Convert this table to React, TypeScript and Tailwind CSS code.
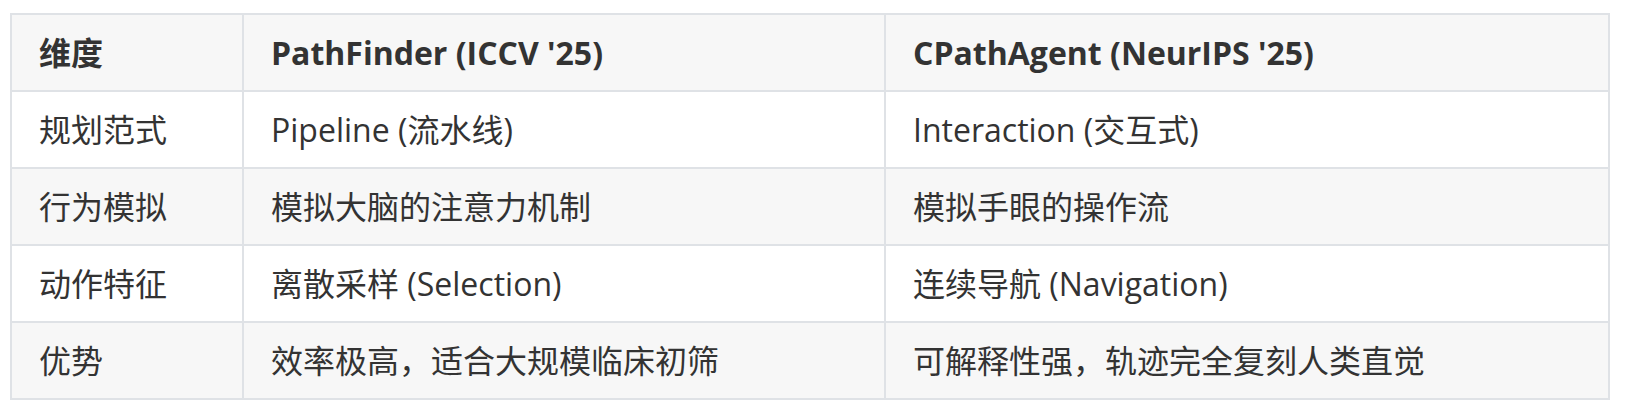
import React from "react";

const HEADERS = ["维度", "PathFinder (ICCV '25)", "CPathAgent (NeurIPS '25)"];

const ROWS: string[][] = [
  ["规划范式", "Pipeline (流水线)", "Interaction (交互式)"],
  ["行为模拟", "模拟大脑的注意力机制", "模拟手眼的操作流"],
  ["动作特征", "离散采样 (Selection)", "连续导航 (Navigation)"],
  ["优势", "效率极高，适合大规模临床初筛", "可解释性强，轨迹完全复刻人类直觉"],
];

export default function App() {
  return (
    <div
      className="min-h-[411px] w-full bg-white pl-[10px] pt-[13px] text-[#333333]"
      style={{ fontFamily: '"Open Sans", "Noto Sans CJK SC", sans-serif' }}
    >
      <div className="grid w-[1600px] grid-cols-[230px_640px_722px] gap-[2px] bg-[#dfe2e6] p-[2px] text-[32px] leading-[49px]">
        {/* Header */}
        {HEADERS.map((h) => (
          <div key={h} className="bg-[#f7f7f7] px-[27px] py-[13px] font-bold whitespace-nowrap">
            {h}
          </div>
        ))}

        {/* Body rows, zebra striped */}
        {ROWS.map((row, i) =>
          row.map((cell, j) => (
            <div
              key={`${i}-${j}`}
              className={
                (i % 2 === 1 ? "bg-[#f7f7f7]" : "bg-white") +
                " px-[27px] py-[13px] whitespace-nowrap"
              }
            >
              {cell}
            </div>
          ))
        )}
      </div>
    </div>
  );
}
